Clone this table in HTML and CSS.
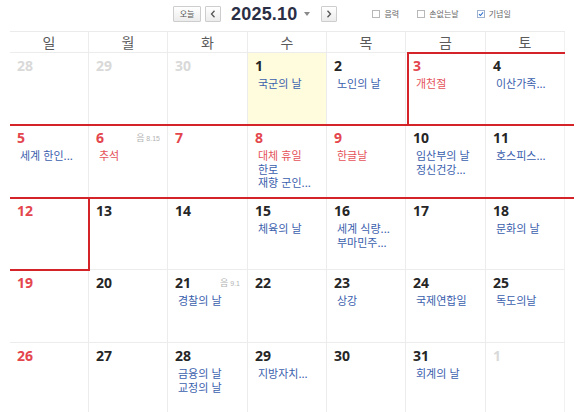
FILE: index.html
```html
<!DOCTYPE html>
<html lang="ko">
<head>
<meta charset="utf-8">
<title>2025.10</title>
<link rel="stylesheet" href="styles.css">
</head>
<body>
<div class="page">
  <div class="top">
    <button class="btn btn-today">오늘</button>
    <button class="btn arrow prev"><svg width="6" height="8" viewBox="0 0 6 8"><path d="M4.5 0.8 L1.5 4 L4.5 7.2" fill="none" stroke="#555" stroke-width="1.3"/></svg></button>
    <span class="title">2025.10</span>
    <span class="caret"></span>
    <button class="btn arrow next"><svg width="6" height="8" viewBox="0 0 6 8"><path d="M1.5 0.8 L4.5 4 L1.5 7.2" fill="none" stroke="#555" stroke-width="1.3"/></svg></button>
    <div class="opts">
      <label class="opt"><span class="box"></span>음력</label>
      <label class="opt"><span class="box"></span>손없는날</label>
      <label class="opt"><span class="box on"><svg width="8" height="8" viewBox="0 0 8 8"><path d="M1.3 4.2 L3.2 6 L6.8 1.8" fill="none" stroke="#2a6fd0" stroke-width="1.4"/></svg></span>기념일</label>
    </div>
  </div>

  <div class="cal">
    <div class="wk">일</div><div class="wk">월</div><div class="wk">화</div><div class="wk">수</div><div class="wk">목</div><div class="wk">금</div><div class="wk">토</div>

    <div class="d off"><div class="dh"><span class="n">28</span></div></div>
    <div class="d off"><div class="dh"><span class="n">29</span></div></div>
    <div class="d off"><div class="dh"><span class="n">30</span></div></div>
    <div class="d cur"><div class="dh"><span class="n">1</span></div><div class="ev">국군의 날</div></div>
    <div class="d"><div class="dh"><span class="n">2</span></div><div class="ev">노인의 날</div></div>
    <div class="d"><div class="dh"><span class="n red">3</span></div><div class="ev red">개천절</div></div>
    <div class="d"><div class="dh"><span class="n">4</span></div><div class="ev">이산가족...</div></div>

    <div class="d"><div class="dh"><span class="n red">5</span></div><div class="ev">세계 한인...</div></div>
    <div class="d"><div class="dh"><span class="n red">6</span><span class="lunar"><b>음</b> 8.15</span></div><div class="ev red">추석</div></div>
    <div class="d"><div class="dh"><span class="n red">7</span></div></div>
    <div class="d"><div class="dh"><span class="n red">8</span></div><div class="ev red">대체 휴일</div><div class="ev">한로</div><div class="ev">재향 군인...</div></div>
    <div class="d"><div class="dh"><span class="n red">9</span></div><div class="ev red">한글날</div></div>
    <div class="d"><div class="dh"><span class="n">10</span></div><div class="ev">임산부의 날</div><div class="ev">정신건강...</div></div>
    <div class="d"><div class="dh"><span class="n">11</span></div><div class="ev">호스피스...</div></div>

    <div class="d"><div class="dh"><span class="n red">12</span></div></div>
    <div class="d"><div class="dh"><span class="n">13</span></div></div>
    <div class="d"><div class="dh"><span class="n">14</span></div></div>
    <div class="d"><div class="dh"><span class="n">15</span></div><div class="ev">체육의 날</div></div>
    <div class="d"><div class="dh"><span class="n">16</span></div><div class="ev">세계 식량...</div><div class="ev">부마민주...</div></div>
    <div class="d"><div class="dh"><span class="n">17</span></div></div>
    <div class="d"><div class="dh"><span class="n">18</span></div><div class="ev">문화의 날</div></div>

    <div class="d"><div class="dh"><span class="n red">19</span></div></div>
    <div class="d"><div class="dh"><span class="n">20</span></div></div>
    <div class="d"><div class="dh"><span class="n">21</span><span class="lunar"><b>음</b> 9.1</span></div><div class="ev">경찰의 날</div></div>
    <div class="d"><div class="dh"><span class="n">22</span></div></div>
    <div class="d"><div class="dh"><span class="n">23</span></div><div class="ev">상강</div></div>
    <div class="d"><div class="dh"><span class="n">24</span></div><div class="ev">국제연합일</div></div>
    <div class="d"><div class="dh"><span class="n">25</span></div><div class="ev">독도의날</div></div>

    <div class="d"><div class="dh"><span class="n red">26</span></div></div>
    <div class="d"><div class="dh"><span class="n">27</span></div></div>
    <div class="d"><div class="dh"><span class="n">28</span></div><div class="ev">금융의 날</div><div class="ev">교정의 날</div></div>
    <div class="d"><div class="dh"><span class="n">29</span></div><div class="ev">지방자치...</div></div>
    <div class="d"><div class="dh"><span class="n">30</span></div></div>
    <div class="d"><div class="dh"><span class="n">31</span></div><div class="ev">회계의 날</div></div>
    <div class="d off"><div class="dh"><span class="n">1</span></div></div>
  </div>

  <svg class="hl" width="580" height="412" viewBox="0 0 580 412">
    <g fill="#d42329">
      <rect x="407" y="52" width="158" height="2"/>
      <rect x="407" y="52" width="2" height="74"/>
      <rect x="10" y="124" width="564" height="2"/>
      <rect x="10" y="197" width="564" height="2"/>
      <rect x="88" y="197" width="2" height="74"/>
      <rect x="10" y="269" width="80" height="2"/>
    </g>
  </svg>
</div>
</body>
</html>
```

FILE: styles.css
```css
* { box-sizing: border-box; }
html, body { margin: 0; padding: 0; background: #fff; }
body {
  font-family: "Noto Sans CJK KR", "Noto Sans", sans-serif;
  color: #333;
  width: 580px;
  height: 412px;
  overflow: hidden;
}
.page { position: relative; width: 580px; height: 412px; }

.top {
  margin-left: 10px;
  width: 555px;
  height: 32px;
  border-bottom: 1px solid #ebebeb;
  display: flex;
  align-items: center;
  padding-left: 163px;
  padding-bottom: 3px;
}
.btn {
  height: 16px;
  border: 1px solid #cdcdcd;
  border-radius: 1px;
  background: linear-gradient(#ffffff, #ececec);
  padding: 0;
  margin: 0;
  display: flex;
  align-items: center;
  justify-content: center;
  font-family: "Noto Sans CJK KR", sans-serif;
  font-size: 8px;
  color: #555;
  line-height: 1;
}
.btn-today { width: 28px; }
.arrow { width: 16px; }
.prev { margin-left: 4px; }
.title {
  margin-left: 10px;
  font-family: "Liberation Sans", Arial, sans-serif;
  font-weight: bold;
  font-size: 18px;
  line-height: 20px;
  color: #2b2f45;
  letter-spacing: 0.2px;
}
.caret {
  margin-left: 7px;
  width: 0;
  height: 0;
  border-left: 3px solid transparent;
  border-right: 3px solid transparent;
  border-top: 4px solid #8a8a8a;
}
.next { margin-left: 11px; }
.opts {
  margin-left: 35px;
  display: flex;
  align-items: center;
  gap: 18px;
}
.opt {
  display: flex;
  align-items: center;
  font-size: 8px;
  color: #666;
  line-height: 12px;
}
.box {
  width: 8px;
  height: 8px;
  border: 1px solid #b8b8b8;
  background: #fff;
  margin-right: 4px;
  display: flex;
  align-items: center;
  justify-content: center;
}
.box svg { display: block; }
.box.on { border-color: #9fb3cf; }

.cal {
  margin-left: 10px;
  width: 555px;
  display: grid;
  grid-template-columns: 79px 79px 80px 79px 79px 80px 79px;
  grid-template-rows: 21px 72px 73px 72px 73px 73px;
}
.wk {
  border-right: 1px solid #ececec;
  border-bottom: 1px solid #ececec;
  text-align: center;
  font-size: 14px;
  line-height: 20px;
  color: #5a5a5a;
}
.d {
  border-right: 1px solid #ececec;
  border-bottom: 1px solid #ececec;
  padding: 5px 7px 0 7px;
  min-width: 0;
}
.wk:nth-child(7n), .d:nth-child(7n) { border-right-color: #f1f1f1; }
.d.cur { background: #fefcdd; }
.dh {
  display: flex;
  justify-content: space-between;
  align-items: center;
  height: 16px;
}
.n {
  font-family: "Noto Sans", "Noto Sans CJK KR", sans-serif;
  font-weight: bold;
  font-size: 14px;
  line-height: 16px;
  color: #262626;
}
.n.red { color: #e4464d; }
.d.off .n { color: #d9d9d9; }
.lunar {
  font-family: "Liberation Sans", Arial, sans-serif;
  font-size: 7px;
  color: #b3b3b3;
  line-height: 12px;
}
.lunar b {
  font-family: "Noto Sans CJK KR", sans-serif;
  font-weight: normal;
  font-size: 9px;
}
.ev {
  margin-left: 3px;
  font-size: 11px;
  line-height: 13.5px;
  color: #3a60ad;
  white-space: nowrap;
}
.dh + .ev { margin-top: 3px; }
.ev.red { color: #e5525a; }

.hl {
  position: absolute;
  left: 0;
  top: 0;
  pointer-events: none;
}
```
